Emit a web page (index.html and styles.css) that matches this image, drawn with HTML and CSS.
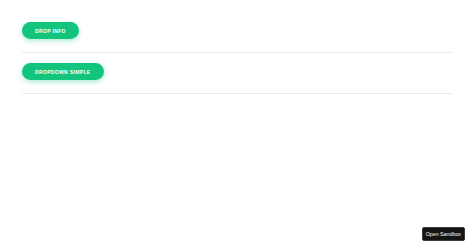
FILE: index.html
```html
<!DOCTYPE html>
<html>
<head>
<meta charset="utf-8">
<link rel="stylesheet" href="styles.css">
</head>
<body>
<main class="page">
  <section class="demo">
    <button class="btn">Drop info</button>
  </section>
  <section class="demo">
    <button class="btn">Dropdown simple</button>
  </section>
</main>
<a class="sandbox">Open Sandbox</a>
</body>
</html>
```
FILE: styles.css
```css
html, body {
  margin: 0;
  background: #fff;
}
.page {
  padding: 22px 22px 0 22px;
  width: 430px;
}
.demo {
  padding-bottom: 13px;
  margin-bottom: 10px;
  border-bottom: 1px solid #ebebeb;
}
.btn {
  display: block;
  height: 17px;
  padding: 0 13px;
  border: none;
  border-radius: 9px;
  background: #13c47d;
  color: #fff;
  font-family: "Liberation Sans", Arial, sans-serif;
  font-weight: bold;
  font-size: 5px;
  letter-spacing: 0.35px;
  text-transform: uppercase;
  box-shadow: 0 2px 5px rgba(19, 196, 125, 0.35);
}
.sandbox {
  position: fixed;
  right: 9px;
  bottom: 7px;
  height: 12px;
  padding: 0 3px;
  line-height: 12px;
  background: #151515;
  border: 1px solid #3a3a3a;
  border-radius: 2px;
  color: #fff;
  font-family: "Liberation Sans", Arial, sans-serif;
  font-size: 5.3px;
}
```
